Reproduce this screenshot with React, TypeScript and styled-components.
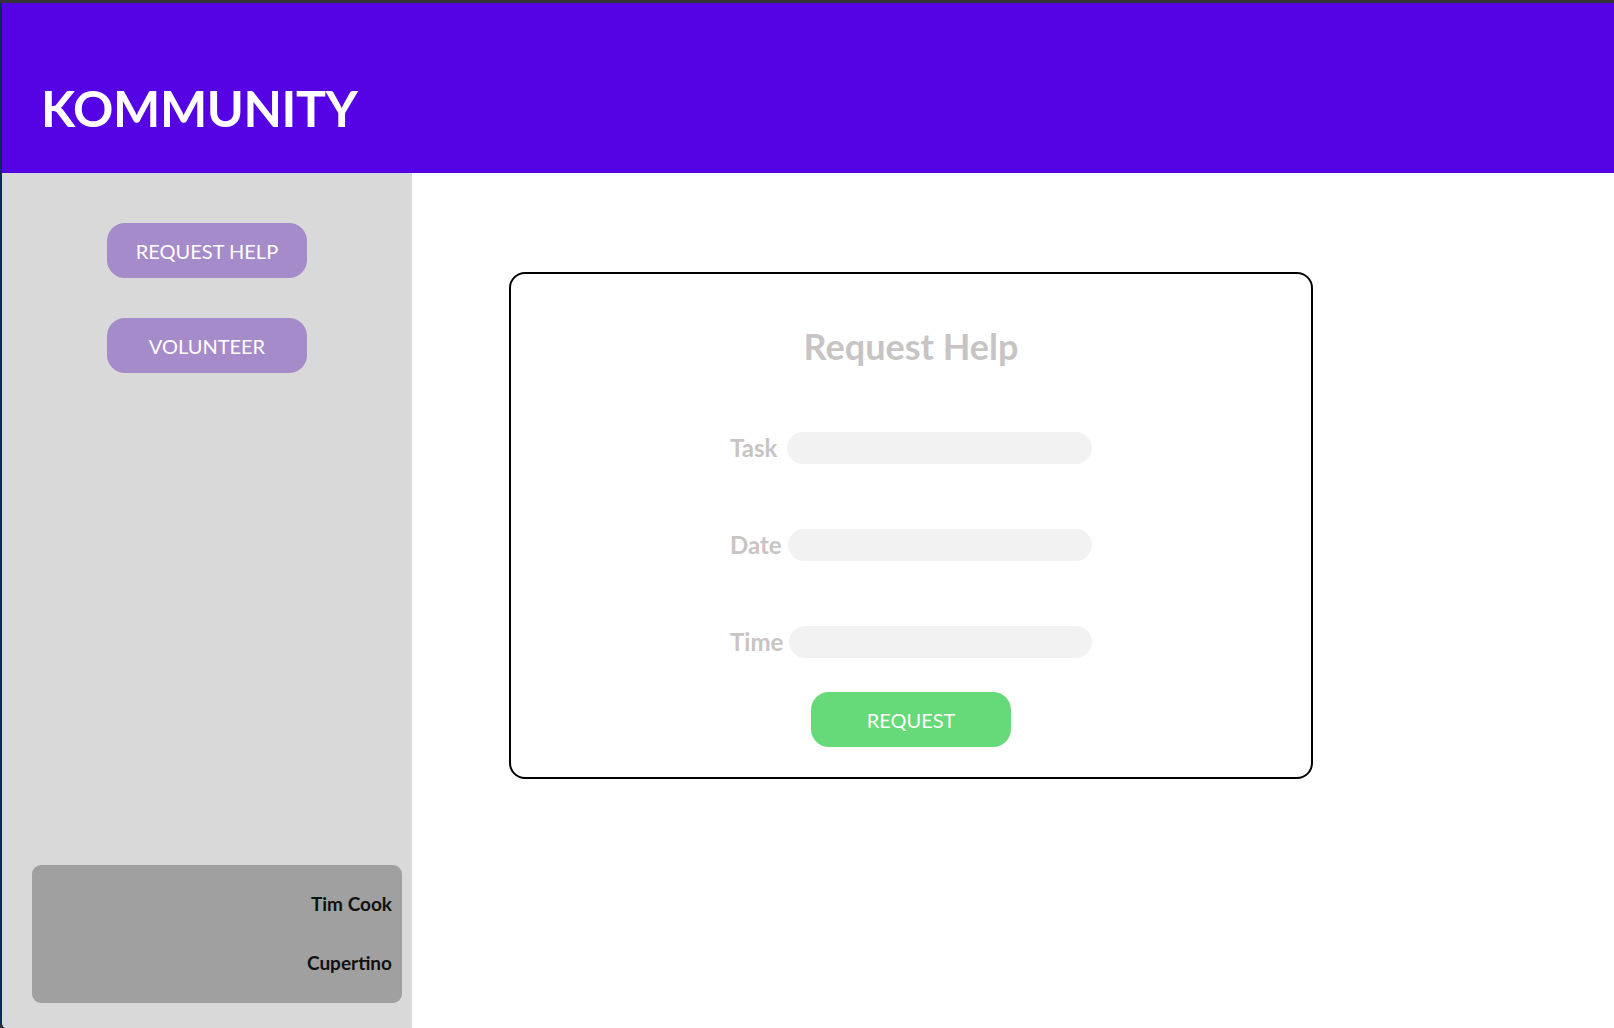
import React from "react";
import styled, { createGlobalStyle } from "styled-components";

const GlobalStyle = createGlobalStyle`
  html, body {
    margin: 0;
    padding: 0;
    background: #333333;
    font-family: Lato, "Open Sans", Arial, sans-serif;
  }
  * { box-sizing: border-box; }
`;

const Frame = styled.div`
  padding-top: 3px;
  height: 1028px;
  overflow: hidden;
`;

const Window = styled.div`
  display: flex;
  flex-direction: column;
  height: 1025px;
  border-left: 2px solid #0b2a5c;
  border-bottom-left-radius: 6px;
  background: #ffffff;
  overflow: hidden;
`;

const Header = styled.header`
  height: 170px;
  flex: none;
  background: #5503e4;
  padding: 75px 0 0 39px;
`;

const Brand = styled.h1`
  margin: 0;
  color: #ffffff;
  font-family: Lato, sans-serif;
  font-weight: 700;
  font-size: 50px;
  line-height: 1.2;
  letter-spacing: -0.4px;
`;

const Body = styled.div`
  flex: 1;
  display: flex;
  min-height: 0;
`;

const Sidebar = styled.aside`
  width: 410px;
  flex: none;
  background: #d9d9d9;
  display: flex;
  flex-direction: column;
  align-items: center;
  padding-top: 50px;
  gap: 40px;
`;

const NavButton = styled.button`
  width: 200px;
  height: 55px;
  border: none;
  border-radius: 18px;
  background: #a58bc9;
  color: #ffffff;
  font-family: Lato, sans-serif;
  font-size: 20px;
  font-weight: 400;
  cursor: pointer;
  padding: 0;
`;

const UserCard = styled.div`
  margin-top: auto;
  margin-bottom: 25px;
  align-self: flex-start;
  margin-left: 30px;
  width: 370px;
  height: 138px;
  border-radius: 9px;
  background: #a0a0a0;
  display: flex;
  flex-direction: column;
  align-items: flex-end;
  padding: 28px 10px 0 0;
  gap: 36px;
`;

const UserLine = styled.div`
  color: #111111;
  font-family: Lato, sans-serif;
  font-weight: 700;
  font-size: 19px;
  line-height: 1.2;
`;

const Main = styled.main`
  flex: 1;
  padding: 99px 0 0 97px;
`;

const FormCard = styled.section`
  width: 804px;
  height: 507px;
  border: 2px solid #000000;
  border-radius: 16px;
  display: flex;
  flex-direction: column;
  align-items: center;
  padding-top: 51px;
`;

const FormTitle = styled.h2`
  margin: 0;
  color: #c9c4c4;
  font-family: Lato, sans-serif;
  font-weight: 700;
  font-size: 36px;
  line-height: 1.2;
`;

const Fields = styled.div`
  margin-top: 64px;
  width: 362px;
  display: flex;
  flex-direction: column;
  gap: 65px;
`;

const FieldRow = styled.label`
  display: flex;
  align-items: center;
  gap: 6px;
  height: 32px;
`;

const FieldLabel = styled.span`
  min-width: 51px;
  color: #c9c4c4;
  font-family: Lato, sans-serif;
  font-weight: 700;
  font-size: 24px;
  line-height: 1;
`;

const FieldInput = styled.input`
  flex: 1;
  height: 32px;
  border: none;
  outline: none;
  border-radius: 16px;
  background: #f2f2f2;
  padding: 0 14px;
  font-family: Lato, sans-serif;
  font-size: 16px;
`;

const SubmitButton = styled.button`
  margin-top: 34px;
  width: 200px;
  height: 55px;
  border: none;
  border-radius: 18px;
  background: #66d978;
  color: #ffffff;
  font-family: Lato, sans-serif;
  font-size: 20px;
  font-weight: 400;
  cursor: pointer;
  padding: 0;
`;

const fields = ["Task", "Date", "Time"];

export default function App() {
  return (
    <>
      <GlobalStyle />
      <Frame>
        <Window>
          <Header>
            <Brand>KOMMUNITY</Brand>
          </Header>
          <Body>
            <Sidebar>
              <NavButton>REQUEST HELP</NavButton>
              <NavButton>VOLUNTEER</NavButton>
              <UserCard>
                <UserLine>Tim Cook</UserLine>
                <UserLine>Cupertino</UserLine>
              </UserCard>
            </Sidebar>
            <Main>
              <FormCard>
                <FormTitle>Request Help</FormTitle>
                <Fields>
                  {fields.map((f) => (
                    <FieldRow key={f}>
                      <FieldLabel>{f}</FieldLabel>
                      <FieldInput type="text" />
                    </FieldRow>
                  ))}
                </Fields>
                <SubmitButton>REQUEST</SubmitButton>
              </FormCard>
            </Main>
          </Body>
        </Window>
      </Frame>
    </>
  );
}
